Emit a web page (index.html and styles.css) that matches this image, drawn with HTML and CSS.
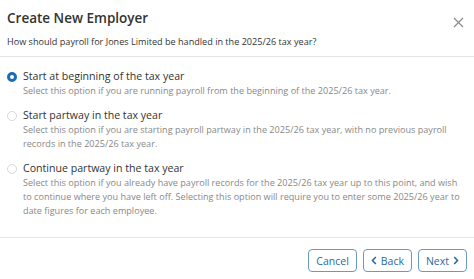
FILE: index.html
```html
<!DOCTYPE html>
<html>
<head>
<meta charset="utf-8">
<link rel="stylesheet" href="styles.css">
</head>
<body>
<div class="dialog">
  <div class="header">
    <div class="header-text">
      <h1 class="title">Create New Employer</h1>
      <p class="subtitle">How should payroll for Jones Limited be handled in the 2025/26 tax year?</p>
    </div>
    <button class="close" aria-label="Close">
      <svg width="11" height="11" viewBox="0 0 11 11"><path d="M1 1L10 10M10 1L1 10" stroke="#8a8a8a" stroke-width="1.2" fill="none"/></svg>
    </button>
  </div>
  <div class="body">
    <label class="option">
      <span class="radio checked"></span>
      <span class="option-text">
        <span class="option-title">Start at beginning of the tax year</span>
        <span class="option-desc">Select this option if you are running payroll from the beginning of the 2025/26 tax year.</span>
      </span>
    </label>
    <label class="option">
      <span class="radio"></span>
      <span class="option-text">
        <span class="option-title">Start partway in the tax year</span>
        <span class="option-desc">Select this option if you are starting payroll partway in the 2025/26 tax year, with no previous payroll records in the 2025/26 tax year.</span>
      </span>
    </label>
    <label class="option">
      <span class="radio"></span>
      <span class="option-text">
        <span class="option-title">Continue partway in the tax year</span>
        <span class="option-desc">Select this option if you already have payroll records for the 2025/26 tax year up to this point, and wish to continue where you have left off. Selecting this option will require you to enter some 2025/26 year to date figures for each employee.</span>
      </span>
    </label>
  </div>
  <div class="footer">
    <button class="btn">Cancel</button>
    <button class="btn"><svg class="chev" width="6" height="9" viewBox="0 0 6 9"><path d="M4.8 1L1.5 4.5L4.8 8" stroke="#2a69a0" stroke-width="1.6" fill="none"/></svg>Back</button>
    <button class="btn">Next<svg class="chev after" width="6" height="9" viewBox="0 0 6 9"><path d="M1.2 1L4.5 4.5L1.2 8" stroke="#2a69a0" stroke-width="1.6" fill="none"/></svg></button>
  </div>
</div>
</body>
</html>
```
FILE: styles.css
```css
* { box-sizing: border-box; }
html, body { margin: 0; padding: 0; background: #fff; }
body { font-family: "Open Sans", "Noto Sans", sans-serif; color: #333; width: 474px; height: 279px; overflow: hidden; }
.dialog { display: flex; flex-direction: column; height: 279px; }
.header { display: flex; align-items: flex-start; justify-content: space-between; padding: 8px 10px 0 7px; height: 57px; border-bottom: 1px solid #e5e5e5; }
.title { margin: 0; font-size: 13.5px; font-weight: 600; line-height: 20px; color: #333; }
.subtitle { margin: 7px 0 0; font-size: 9.1px; line-height: 13px; color: #333; }
.close { border: 0; background: none; padding: 0; margin-top: 9px; width: 11px; height: 11px; display: flex; }
.body { display: flex; flex-direction: column; padding: 11px 7px 0 7px; gap: 9px; height: 181px; border-bottom: 1px solid #e5e5e5; }
.option { display: flex; align-items: flex-start; gap: 6px; }
.radio { width: 10px; height: 10px; border-radius: 50%; border: 1px solid #d8d8d8; margin-top: 4px; flex: none; background: #fff; }
.radio.checked { border: 3px solid #1a6db5; }
.option-text { display: flex; flex-direction: column; }
.option-title { font-size: 10.6px; line-height: 16px; color: #333; }
.option-desc { font-size: 9.1px; line-height: 14px; color: #888; }
.footer { display: flex; justify-content: flex-end; gap: 6px; padding: 11px 7px 0 0; }
.btn { font-family: inherit; font-size: 10.5px; color: #2a69a0; background: #fff; border: 1px solid #6a9ac4; border-radius: 4px; height: 23px; padding: 0 7px; min-width: 48px; display: flex; align-items: center; justify-content: center; gap: 4px; }
.chev { flex: none; }
```
